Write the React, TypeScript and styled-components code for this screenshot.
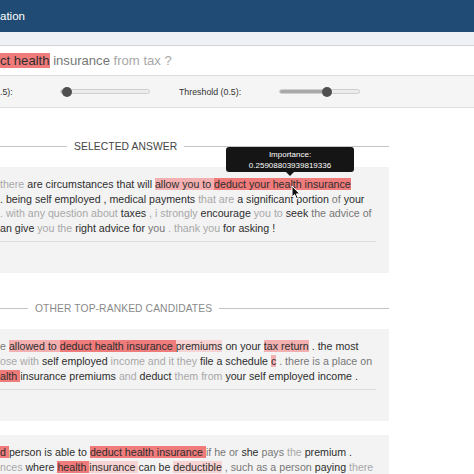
import styled, { createGlobalStyle } from "styled-components";

type Tone = "d" | "m" | "l";
type Token = [string, Tone, number?];

const GlobalStyle = createGlobalStyle`
    html, body {
        margin: 0;
        padding: 0;
        background: #ffffff;
        overflow: hidden;
    }
    body {
        font-family: "Liberation Sans", Helvetica, Arial, sans-serif;
        color: #333;
    }
`;

const toneColors: Record<Tone, string> = {
    d: "#2e2e2e",
    m: "#777777",
    l: "#a8a8a8"
};

const heatColors = ["transparent", "#f8d3d3", "#f4b0b0", "#ef7b7b"];

const question: Token[] = [["ct health", "d", 3], [" insurance ", "m"], ["from tax ?", "l"]];

const selectedAnswer: Token[][] = [
    [["there", "l"], [" are circumstances that will ", "d"], ["allow you to ", "d", 2], ["deduct your health insurance", "d", 3]],
    [[". being self employed , medical payments ", "d"], ["that are ", "l"], ["a significant portion ", "d"], ["of ", "m"], ["your", "d"]],
    [[". with any question about ", "l"], ["taxes", "d"], [" , i strongly ", "l"], ["encourage ", "d"], ["you to ", "l"], ["seek ", "d"], ["the advice of", "m"]],
    [["an give ", "d"], ["you the ", "l"], ["right advice for ", "d"], ["you ", "m"], [". thank you ", "l"], ["for asking !", "d"]]
];

const candidates: Token[][][] = [
    [
        [["e ", "m"], ["allowed to ", "d", 2], ["deduct health insurance ", "d", 3], ["premiums", "d", 1], [" on your ", "d"], ["tax ", "d", 2], ["return", "d", 2], [" . the most", "d"]],
        [["ose with ", "l"], ["self employed ", "d"], ["income and it they ", "l"], ["file a schedule ", "d"], ["c", "d", 2], [" . there is a place on", "m"]],
        [["alth ", "d", 3], ["insurance premiums ", "d"], ["and ", "l"], ["deduct ", "d"], ["them from ", "l"], ["your self employed income .", "d"]]
    ],
    [
        [["d ", "d", 3], ["person is able to ", "d"], ["deduct health insurance ", "d", 3], ["if he or ", "m"], ["she ", "d"], ["pays ", "m"], ["the ", "l"], ["premium .", "d"]],
        [["nces ", "l"], ["where ", "d"], ["health ", "d", 3], ["insurance ", "d", 1], ["can be ", "d"], ["deductible", "d", 1], [" , such as a person ", "m"], ["paying ", "d"], ["there", "l"]]
    ]
];

const Header = styled.header`
    height: 32px;
    background: #1f4b74;
    color: #ffffff;
    font-size: 11.5px;
    display: flex;
    align-items: center;
`;

const SubBar = styled.div`
    height: 13px;
    background: #eef1f5;
    border-bottom: 1px solid #d4d4d4;
`;

const QuestionRow = styled.div`
    height: 29px;
    border-bottom: 1px solid #dcdcdc;
    display: flex;
    align-items: center;
`;

const QuestionText = styled.div`
    font-size: 13.1px;
    line-height: 16px;
    white-space: nowrap;
`;

const ControlsRow = styled.div`
    height: 31px;
    background: #f5f5f5;
    border-bottom: 1px solid #dcdcdc;
    display: flex;
    align-items: center;
    font-size: 8.8px;
    color: #333;
`;

const ControlLabel = styled.span<{ $width: number; $gap?: number }>`
    width: ${p => p.$width}px;
    margin-left: ${p => p.$gap ?? 0}px;
    white-space: nowrap;
`;

const Track = styled.div<{ $width: number }>`
    position: relative;
    width: ${p => p.$width}px;
    height: 5px;
    box-sizing: border-box;
    border: 1px solid #cfcfcf;
    border-radius: 3px;
    background: #ececec;
`;

const TrackFill = styled.div`
    height: 100%;
    border-radius: 3px;
    background: #a9a9a9;
`;

const Thumb = styled.div`
    position: absolute;
    top: 50%;
    width: 10px;
    height: 10px;
    border-radius: 50%;
    background: #4f4f4f;
    transform: translate(-50%, -50%);
`;

const Main = styled.main`
    width: 389px;
    display: flex;
    flex-direction: column;
`;

const Section = styled.section<{ $top: number }>`
    margin-top: ${p => p.$top}px;
    display: flex;
    flex-direction: column;
    row-gap: 14px;
`;

const Heading = styled.div<{ $muted?: boolean }>`
    display: flex;
    align-items: center;
    column-gap: 7px;
    height: 14px;
    font-size: 10.3px;
    letter-spacing: 0.1px;
    color: ${p => (p.$muted ? "#8a8a8a" : "#444444")};
    white-space: nowrap;
`;

const Rule = styled.span<{ $width?: number }>`
    height: 1px;
    background: #c4c4c4;
    ${p => (p.$width ? `width: ${p.$width}px;` : "flex: 1;")}
`;

const Cards = styled.div`
    display: flex;
    flex-direction: column;
    row-gap: 14px;
`;

const Card = styled.div`
    position: relative;
    background: #f3f3f3;
    padding: 10px 13px 0 0;
`;

const Line = styled.div`
    font-size: 10.65px;
    line-height: 14.6px;
    white-space: nowrap;
`;

const Word = styled.span<{ $tone: Tone; $heat: number }>`
    color: ${p => toneColors[p.$tone]};
    background: ${p => heatColors[p.$heat]};
`;

const Divider = styled.div`
    margin-top: 6px;
    height: 1px;
    background: #dedede;
`;

const CardFooter = styled.div`
    height: 31px;
`;

const Tooltip = styled.div`
    position: absolute;
    left: 226px;
    top: -20px;
    width: 128px;
    height: 25px;
    border-radius: 3px;
    background: #151515;
    color: #ffffff;
    font-size: 8px;
    line-height: 11px;
    text-align: center;
    display: flex;
    flex-direction: column;
    justify-content: center;

    &::after {
        content: "";
        position: absolute;
        left: 60px;
        bottom: -4px;
        border-left: 4px solid transparent;
        border-right: 4px solid transparent;
        border-top: 4px solid #151515;
    }
`;

const Cursor = styled.svg`
    position: absolute;
    left: 291px;
    top: 18px;
`;

function Slider({ width, value }: { width: number; value: number }) {
    return (
        <Track $width={width}>
            <TrackFill style={{ width: `${value}%` }} />
            <Thumb style={{ left: `${value}%` }} />
        </Track>
    );
}

function Words({ tokens }: { tokens: Token[] }) {
    return (
        <>
            {tokens.map(([text, tone, heat], j) => (
                <Word key={j} $tone={tone} $heat={heat ?? 0}>{text}</Word>
            ))}
        </>
    );
}

function TextLines({ lines }: { lines: Token[][] }) {
    return (
        <>
            {lines.map((line, i) => (
                <Line key={i}>
                    <Words tokens={line} />
                </Line>
            ))}
        </>
    );
}

export default function App() {
    return (
        <>
            <GlobalStyle />
            <Header>ation</Header>
            <SubBar />
            <QuestionRow>
                <QuestionText>
                    <Words tokens={question} />
                </QuestionText>
            </QuestionRow>
            <ControlsRow>
                <ControlLabel $width={60}>.5):</ControlLabel>
                <Slider width={90} value={7} />
                <ControlLabel $width={100} $gap={29}>Threshold (0.5):</ControlLabel>
                <Slider width={81} value={60} />
            </ControlsRow>
            <Main>
                <Section $top={31}>
                    <Heading>
                        <Rule $width={67} />
                        SELECTED ANSWER
                        <Rule />
                    </Heading>
                    <Card>
                        <TextLines lines={selectedAnswer} />
                        <Divider />
                        <CardFooter />
                        <Tooltip>
                            <span>Importance:</span>
                            <span>0.25908803939819336</span>
                        </Tooltip>
                        <Cursor width="10" height="15" viewBox="0 0 10 15">
                            <path d="M1 1 L1 12 L3.6 9.6 L5.6 14 L7.3 13.2 L5.4 8.9 L8.8 8.9 Z" fill="#111" stroke="#fff" strokeWidth="1" strokeLinejoin="round" />
                        </Cursor>
                    </Card>
                </Section>
                <Section $top={28}>
                    <Heading $muted>
                        <Rule $width={28} />
                        OTHER TOP-RANKED CANDIDATES
                        <Rule />
                    </Heading>
                    <Cards>
                        {candidates.map((lines, i) => (
                            <Card key={i}>
                                <TextLines lines={lines} />
                                <Divider />
                                <CardFooter />
                            </Card>
                        ))}
                    </Cards>
                </Section>
            </Main>
        </>
    );
}
